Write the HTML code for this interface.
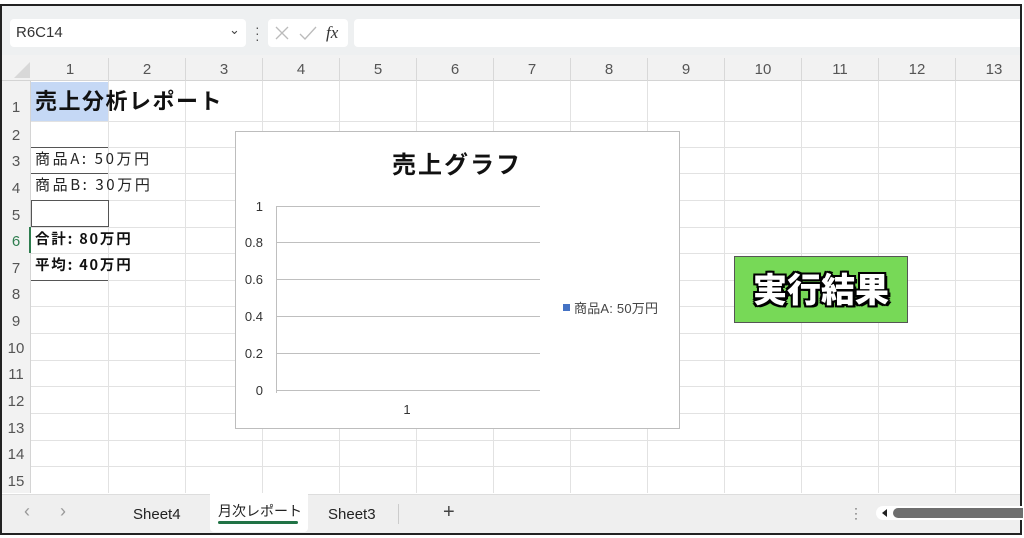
<!DOCTYPE html>
<html><head><meta charset="utf-8"><style>
*{margin:0;padding:0;box-sizing:border-box}
body{width:1024px;height:538px;overflow:hidden;background:#fff;font-family:"Liberation Sans","Noto Sans CJK JP",sans-serif;position:relative}
.abs{position:absolute}
.jp{font-family:"Noto Sans CJK JP",sans-serif}
</style></head><body>
<div class="abs" style="left:0;top:4px;width:1022px;height:531px;border:2px solid #222"></div>
<div class="abs" style="left:2px;top:6px;width:1018px;height:49px;background:#eef0f1"></div>
<div class="abs" style="left:10px;top:19px;width:236px;height:28px;background:#fff;border-radius:4px;font-size:15px;color:#333;padding:5px 0 0 6px">R6C14</div>
<div class="abs" style="left:229px;top:22px;font-size:13px;color:#444">&#8964;</div>
<div class="abs" style="left:255px;top:24px;width:3px;height:14px;color:#555;font-size:14px;line-height:6px">·<br>·<br>·</div>
<div class="abs" style="left:268px;top:19px;width:80px;height:28px;background:#fff;border-radius:4px"></div>
<svg class="abs" style="left:268px;top:19px" width="80" height="28"><g stroke="#bbb" stroke-width="1.3" fill="none"><path d="M8 8 L20 20 M20 8 L8 20"/><path d="M32 15 L37 20 L48 8"/></g><text x="58" y="19" font-family="Liberation Serif" font-style="italic" font-size="17" fill="#333">fx</text></svg>
<div class="abs" style="left:354px;top:19px;width:666px;height:28px;background:#fff;border-radius:4px 0 0 4px"></div>
<div class="abs" style="left:2px;top:55px;width:1018px;height:26px;background:#f2f2f2;border-bottom:1px solid #d4d4d4"></div>
<div class="abs" style="left:14px;top:62px;width:0;height:0;border-left:16px solid transparent;border-bottom:16px solid #d8d8d8"></div>
<div class="abs" style="left:2px;top:81px;width:29px;height:412px;background:#f2f2f2;border-right:1px solid #d4d4d4"></div>
<svg class="abs" style="left:0;top:0" width="1024" height="538">
<g stroke="#e2e2e2" stroke-width="1">
<line x1="108.5" y1="81" x2="108.5" y2="493"/><line x1="185.5" y1="81" x2="185.5" y2="493"/><line x1="262.5" y1="81" x2="262.5" y2="493"/><line x1="339.5" y1="81" x2="339.5" y2="493"/><line x1="416.5" y1="81" x2="416.5" y2="493"/><line x1="493.5" y1="81" x2="493.5" y2="493"/><line x1="570.5" y1="81" x2="570.5" y2="493"/><line x1="647.5" y1="81" x2="647.5" y2="493"/><line x1="724.5" y1="81" x2="724.5" y2="493"/><line x1="801.5" y1="81" x2="801.5" y2="493"/><line x1="878.5" y1="81" x2="878.5" y2="493"/><line x1="955.5" y1="81" x2="955.5" y2="493"/>
<line x1="31" y1="121.5" x2="1020" y2="121.5"/><line x1="31" y1="147.5" x2="1020" y2="147.5"/><line x1="31" y1="173.5" x2="1020" y2="173.5"/><line x1="31" y1="200.5" x2="1020" y2="200.5"/><line x1="31" y1="227.5" x2="1020" y2="227.5"/><line x1="31" y1="253.5" x2="1020" y2="253.5"/><line x1="31" y1="280.5" x2="1020" y2="280.5"/><line x1="31" y1="306.5" x2="1020" y2="306.5"/><line x1="31" y1="333.5" x2="1020" y2="333.5"/><line x1="31" y1="360.5" x2="1020" y2="360.5"/><line x1="31" y1="386.5" x2="1020" y2="386.5"/><line x1="31" y1="413.5" x2="1020" y2="413.5"/><line x1="31" y1="440.5" x2="1020" y2="440.5"/><line x1="31" y1="466.5" x2="1020" y2="466.5"/>
</g>
<g stroke="#d8d8d8"><line x1="108.5" y1="58" x2="108.5" y2="81"/><line x1="185.5" y1="58" x2="185.5" y2="81"/><line x1="262.5" y1="58" x2="262.5" y2="81"/><line x1="339.5" y1="58" x2="339.5" y2="81"/><line x1="416.5" y1="58" x2="416.5" y2="81"/><line x1="493.5" y1="58" x2="493.5" y2="81"/><line x1="570.5" y1="58" x2="570.5" y2="81"/><line x1="647.5" y1="58" x2="647.5" y2="81"/><line x1="724.5" y1="58" x2="724.5" y2="81"/><line x1="801.5" y1="58" x2="801.5" y2="81"/><line x1="878.5" y1="58" x2="878.5" y2="81"/><line x1="955.5" y1="58" x2="955.5" y2="81"/></g>
<g font-family="Liberation Sans" font-size="15" fill="#555" text-anchor="middle">
<text x="70" y="74">1</text><text x="147" y="74">2</text><text x="224" y="74">3</text><text x="301" y="74">4</text><text x="378" y="74">5</text><text x="455" y="74">6</text><text x="532" y="74">7</text><text x="609" y="74">8</text><text x="686" y="74">9</text><text x="763" y="74">10</text><text x="840" y="74">11</text><text x="917" y="74">12</text><text x="994" y="74">13</text>
<text x="16" y="112">1</text><text x="16" y="140">2</text><text x="16" y="166">3</text><text x="16" y="193">4</text><text x="16" y="220">5</text><text x="16" y="246" fill="#2e7d4f">6</text><text x="16" y="273">7</text><text x="16" y="299">8</text><text x="16" y="326">9</text><text x="16" y="353">10</text><text x="16" y="379">11</text><text x="16" y="406">12</text><text x="16" y="433">13</text><text x="16" y="459">14</text><text x="16" y="486">15</text>
</g>
<line x1="30" y1="227" x2="30" y2="253" stroke="#2e7d4f" stroke-width="2"/>
<g stroke="#555" stroke-width="1"><line x1="31" y1="147.5" x2="108" y2="147.5"/><line x1="31" y1="173.5" x2="108" y2="173.5"/><rect x="31.5" y="200.5" width="77" height="26" fill="none"/><line x1="31" y1="280.5" x2="108" y2="280.5"/></g>
</svg>
<div class="abs" style="left:31px;top:82px;width:77px;height:39px;background:#c5d8f5"></div>
<div class="abs jp" style="left:35px;top:84px;font-size:22px;font-weight:bold;color:#111;white-space:nowrap;letter-spacing:1.5px;line-height:32px">売上分析レポート</div>
<div class="abs jp" style="left:35px;top:148px;font-size:15px;color:#222;white-space:nowrap;letter-spacing:2.6px;line-height:22px">商品A: 50万円</div>
<div class="abs jp" style="left:35px;top:174px;font-size:15px;color:#222;white-space:nowrap;letter-spacing:2.6px;line-height:22px">商品B: 30万円</div>
<div class="abs jp" style="left:35px;top:228px;font-size:14.5px;font-weight:bold;color:#111;white-space:nowrap;letter-spacing:1.8px;line-height:22px">合計: 80万円</div>
<div class="abs jp" style="left:35px;top:254px;font-size:14.5px;font-weight:bold;color:#111;white-space:nowrap;letter-spacing:1.8px;line-height:22px">平均: 40万円</div>
<svg class="abs" style="left:235px;top:131px" width="445" height="298">
<rect x="0.5" y="0.5" width="444" height="297" fill="#fff" stroke="#bdbdbd"/>
<text x="222" y="42" text-anchor="middle" font-family="Noto Sans CJK JP" font-weight="bold" font-size="24" letter-spacing="2" fill="#111">売上グラフ</text>
<g stroke="#bfbfbf"><line x1="41" y1="75.5" x2="305" y2="75.5"/><line x1="41" y1="111.5" x2="305" y2="111.5"/><line x1="41" y1="148.5" x2="305" y2="148.5"/><line x1="41" y1="185.5" x2="305" y2="185.5"/><line x1="41" y1="222.5" x2="305" y2="222.5"/><line x1="41" y1="259.5" x2="305" y2="259.5"/><line x1="41.5" y1="75" x2="41.5" y2="262"/></g>
<g font-family="Liberation Sans" font-size="13" fill="#333" text-anchor="end"><text x="28" y="80">1</text><text x="28" y="116">0.8</text><text x="28" y="153">0.6</text><text x="28" y="190">0.4</text><text x="28" y="227">0.2</text><text x="28" y="264">0</text></g>
<text x="172" y="283" font-family="Liberation Sans" font-size="13" fill="#333" text-anchor="middle">1</text>
<rect x="328" y="173" width="7" height="7" fill="#4472c4"/>
<text x="339" y="182" font-family="Liberation Sans,Noto Sans CJK JP" font-size="13" fill="#444" letter-spacing="0.2">商品A: 50万円</text>
</svg>
<div class="abs" style="left:734px;top:256px;width:174px;height:67px;background:#77d957;border:1px solid #555"></div>
<div class="abs jp" style="left:734px;top:263px;width:174px;text-align:center;font-size:34px;font-weight:900;color:#fff;text-shadow:2px 0 0 #000,-2px 0 0 #000,0 2px 0 #000,0 -2px 0 #000,2px 2px 0 #000,-2px -2px 0 #000,2px -2px 0 #000,-2px 2px 0 #000,3px 2px 0 #000;line-height:50px">実行結果</div>
<div class="abs" style="left:2px;top:494px;width:1018px;height:39px;background:#efefef;border-top:1px solid #ddd"></div>
<div class="abs" style="left:24px;top:501px;font-size:18px;color:#999">&#8249;</div>
<div class="abs" style="left:60px;top:501px;font-size:18px;color:#999">&#8250;</div>
<div class="abs" style="left:133px;top:506px;font-size:15px;color:#222">Sheet4</div>
<div class="abs" style="left:210px;top:494px;width:98px;height:38px;background:#fff;border-radius:0 0 4px 4px"></div>
<div class="abs jp" style="left:218px;top:501px;font-size:14px;color:#222">月次レポート</div>
<div class="abs" style="left:218px;top:521px;width:80px;height:3px;background:#217346;border-radius:2px"></div>
<div class="abs" style="left:328px;top:506px;font-size:15px;color:#222">Sheet3</div>
<div class="abs" style="left:398px;top:504px;width:1px;height:20px;background:#ccc"></div>
<div class="abs" style="left:443px;top:501px;font-size:20px;color:#444">+</div>
<div class="abs" style="left:854px;top:506px;width:3px;font-size:12px;line-height:5px;color:#444">·<br>·<br>·</div>
<div class="abs" style="left:876px;top:506px;width:146px;height:14px;background:#fff;border-radius:7px 0 0 7px"></div>
<div class="abs" style="left:882px;top:509px;width:0;height:0;border-top:4px solid transparent;border-bottom:4px solid transparent;border-right:5px solid #222"></div>
<div class="abs" style="left:893px;top:508px;width:130px;height:10px;background:#6e6e6e;border-radius:5px 0 0 5px"></div>
</body></html>
